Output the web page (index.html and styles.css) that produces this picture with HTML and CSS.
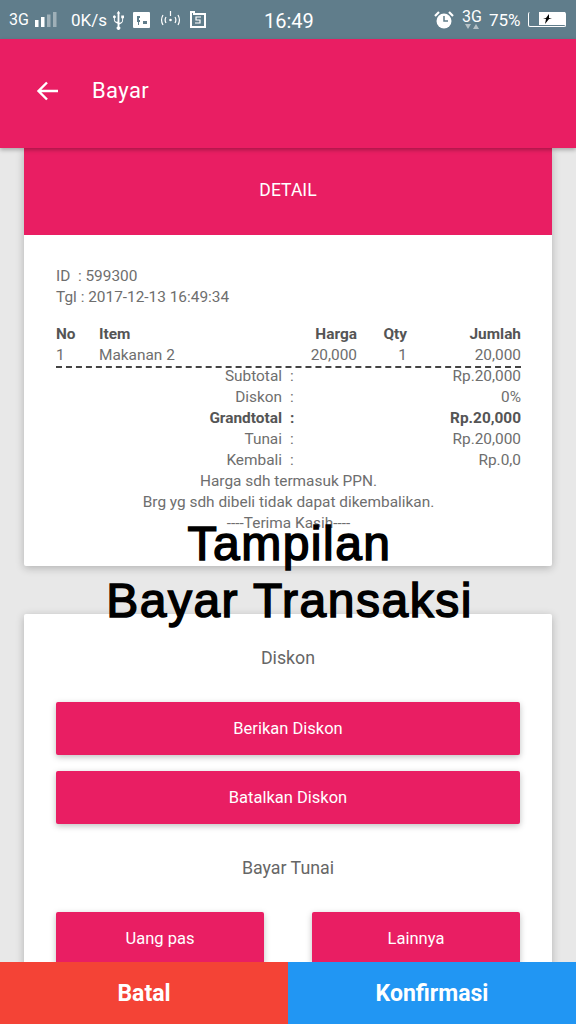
FILE: index.html
```html
<!DOCTYPE html>
<html lang="id">
<head>
<meta charset="utf-8">
<title>Bayar</title>
<link rel="stylesheet" href="styles.css">
</head>
<body>
<div class="app">
  <div class="status">
    <div class="st-left">
      <span class="st-3g">3G</span>
      <svg class="ic" width="22" height="18" viewBox="0 0 22 18"><rect x="0" y="9" width="3.500" height="7" fill="#fff"/><rect x="6" y="6" width="3.500" height="10" fill="#fff"/><rect x="12" y="3.500" width="3.500" height="12.500" fill="#9fb0b8"/><rect x="18" y="1" width="3.500" height="15" fill="#9fb0b8"/></svg>
      <span class="st-net">0K/s</span>
      <svg class="ic-usb" width="11" height="20" viewBox="0 0 12 20"><path d="M6 0l2 3H7v10c2 0 3-1 3-3V8H9V5h3v3h-1v2c0 3-2 4-4 5v2a2 2 0 1 1-2 0v-3c-2-1-4-2-4-4V8a1.500 1.500 0 1 1 1 0v2c0 1 1 2 3 2V3H4z" fill="#fff"/></svg>
      <svg class="ic-box" width="17" height="16" viewBox="0 0 17 16"><rect width="17" height="16" rx="1" fill="#fff"/><path d="M4 4h3v2H6v2h1v2H6v3H5v-3H4zM10 9h4v3h-4z" fill="#607d8b"/></svg>
      <svg class="ic-hot" width="21" height="18" viewBox="0 0 21 18"><g fill="none" stroke="#fff" stroke-width="1.200"><path d="M3 4a10 10 0 0 0 0 10M6 6a6 6 0 0 0 0 6M18 4a10 10 0 0 1 0 10M15 6a6 6 0 0 1 0 6M10.500 0v5"/></g><circle cx="10.500" cy="9" r="1.300" fill="#fff"/></svg>
      <svg class="ic-s" width="16" height="17" viewBox="0 0 16 17"><path d="M1 1h3v2h11v13H1z" fill="none" stroke="#fff" stroke-width="2"/><path d="M11 6H6v3h4v3H5" fill="none" stroke="#fff" stroke-width="1.200"/></svg>
    </div>
    <span class="clock">16:49</span>
    <div class="st-right">
      <svg width="20" height="18" viewBox="0 0 20 18"><circle cx="10" cy="10" r="7.500" fill="#fff"/><path d="M10 5v5h4" fill="none" stroke="#607d8b" stroke-width="1.500"/><path d="M1 5l4-4M19 5l-4-4" stroke="#fff" stroke-width="2.200"/></svg>
      <div class="net3g"><span>3G</span><svg width="14" height="6" viewBox="0 0 14 6"><path d="M0 0h6L3 5zM8 5h6l-3-5z" fill="#b5c1c6"/></svg></div>
      <span class="pct">75%</span>
      <div class="batt"><div class="batt-fill"><svg width="9" height="10" viewBox="0 0 9 10"><path d="M6 0L3 4H0l3 1-1 5 4-5h3L6 4z" fill="#000"/></svg></div></div>
    </div>
  </div>

  <header class="bar">
    <svg class="back" width="24" height="24" viewBox="0 0 24 24"><path d="M22 12H3M11 3.500L2.500 12l8.500 8.500" fill="none" stroke="#fff" stroke-width="2.400"/></svg>
    <span class="bar-title">Bayar</span>
  </header>

  <main class="scroll">
    <section class="card detail">
      <div class="detail-head">DETAIL</div>
      <div class="receipt">
        <div class="meta">ID &nbsp;: 599300</div>
        <div class="meta">Tgl : 2017-12-13 16:49:34</div>
        <div class="items">
          <div class="row strong"><span class="c-no">No</span><span class="c-item">Item</span><span class="c-price">Harga</span><span class="c-qty">Qty</span><span class="c-sum">Jumlah</span></div>
          <div class="row"><span class="c-no">1</span><span class="c-item">Makanan 2</span><span class="c-price">20,000</span><span class="c-qty">1</span><span class="c-sum">20,000</span></div>
        </div>
        <div class="totals">
          <div class="total"><span class="t-label">Subtotal</span><span class="t-colon">:</span><span class="t-val">Rp.20,000</span></div>
          <div class="total"><span class="t-label">Diskon</span><span class="t-colon">:</span><span class="t-val">0%</span></div>
          <div class="total strong"><span class="t-label">Grandtotal</span><span class="t-colon">:</span><span class="t-val">Rp.20,000</span></div>
          <div class="total"><span class="t-label">Tunai</span><span class="t-colon">:</span><span class="t-val">Rp.20,000</span></div>
          <div class="total"><span class="t-label">Kembali</span><span class="t-colon">:</span><span class="t-val">Rp.0,0</span></div>
        </div>
        <div class="note">Harga sdh termasuk PPN.</div>
        <div class="note">Brg yg sdh dibeli tidak dapat dikembalikan.</div>
        <div class="note">----Terima Kasih----</div>
      </div>
    </section>

    <section class="card pay">
      <div class="pay-label first">Diskon</div>
      <button class="btn full">Berikan Diskon</button>
      <button class="btn full second">Batalkan Diskon</button>
      <div class="pay-label tunai">Bayar Tunai</div>
      <div class="btn-row">
        <button class="btn half">Uang pas</button>
        <button class="btn half">Lainnya</button>
      </div>
    </section>
  </main>

  <div class="caption">Tampilan<br>Bayar Transaksi</div>

  <footer class="foot">
    <div class="foot-btn cancel">Batal</div>
    <div class="foot-btn ok">Konfirmasi</div>
  </footer>
</div>
</body>
</html>
```
FILE: styles.css
```css
* { box-sizing: border-box; }
html, body { margin: 0; padding: 0; }
body { font-family: Roboto, "Liberation Sans", sans-serif; background: #e8e8e8; }
.app { width: 576px; height: 1024px; position: relative; overflow: hidden; display: flex; flex-direction: column; background: #e8e8e8; }

.status { height: 39px; background: #607d8b; color: #fff; display: flex; align-items: center; position: relative; flex: none; }
.st-left { display: flex; align-items: center; padding-left: 9px; }
.st-3g { font-size: 16px; width: 26px; }
.st-net { font-size: 17px; margin-left: 14px; width: 42px; }
.ic-usb { margin-left: 0; }
.ic-box { margin-left: 9px; }
.ic-hot { margin-left: 10px; }
.ic-s { margin-left: 9px; }
.clock { position: absolute; left: 264px; top: 10px; font-size: 20px; line-height: 23px; }
.st-right { margin-left: auto; display: flex; align-items: center; padding-right: 10px; }
.net3g { display: flex; flex-direction: column; align-items: center; font-size: 16px; line-height: 15px; margin-left: 8px; width: 20px; }
.net3g svg { display: block; }
.pct { font-size: 17px; margin-left: 7px; width: 39px; }
.batt { width: 38px; height: 15px; border: 1px solid #fff; border-top: 0; border-radius: 2px; display: flex; justify-content: flex-end; }
.batt-fill { width: 26px; height: 13px; background: #fff; display: flex; align-items: center; padding-left: 4px; }

.bar { height: 109px; background: #e91e63; display: flex; align-items: center; flex: none; padding: 0 0 6px 36px; color: #fff; box-shadow: 0 2px 4px rgba(0,0,0,.28); position: relative; z-index: 2; }
.back { display: block; }
.bar-title { font-size: 22px; margin-left: 32px; letter-spacing: .4px; }

.scroll { flex: 1; padding: 0 24px; overflow: hidden; margin-bottom: 62px; }
.card { background: #fff; border-radius: 2px; box-shadow: 0 2px 8px rgba(0,0,0,.24); }
.detail { height: 418px; }
.detail-head { height: 87px; padding-bottom: 3px; background: #e91e63; color: #fff; font-size: 17.6px; display: flex; align-items: center; justify-content: center; }
.receipt { padding: 31px 31px 0 32px; font-size: 15.4px; color: #6e6e6e; line-height: 21px; }
.items { margin-top: 16px; border-bottom: 2px dashed #444; }
.row { display: flex; height: 21px; }
.strong { font-weight: 700; color: #555; }
.c-no { width: 43px; }
.c-item { flex: 1; }
.c-price { width: 70px; text-align: right; }
.c-qty { width: 50px; text-align: right; }
.c-sum { width: 114px; text-align: right; }
.totals { margin-top: -2px; }
.total { display: flex; height: 21px; }
.t-label { width: 226px; text-align: right; }
.t-colon { width: 12px; margin-left: 8px; }
.t-val { flex: 1; text-align: right; }
.note { text-align: center; height: 21px; }

.pay { margin-top: 48px; height: 420px; padding: 0 32px; color: #666; }
.pay-label { text-align: center; font-size: 17.8px; }
.first { padding-top: 33px; height: 88px; }
.btn { display: block; border: 0; background: #e91e63; color: #fff; font-family: inherit; font-size: 16.5px; height: 53px; padding: 0; border-radius: 2px; box-shadow: 0 2px 6px rgba(0,0,0,.25); }
.full { width: 100%; }
.second { margin-top: 16px; }
.tunai { height: 88px; padding-top: 33px; }
.btn-row { display: flex; justify-content: space-between; }
.half { width: 208px; }

.caption { position: absolute; left: 3px; right: 0; top: 515px; text-align: center; font-family: "Liberation Sans", Arial, sans-serif; font-size: 48px; line-height: 57px; letter-spacing: 1.5px; -webkit-text-stroke: 1.5px #000; color: #000; }

.foot { position: absolute; left: 0; right: 0; bottom: 0; height: 62px; display: flex; z-index: 3; }
.foot-btn { flex: 1; display: flex; align-items: center; justify-content: center; color: #fff; font-size: 23px; font-weight: 700; }
.cancel { background: #f44336; }
.ok { background: #2196f3; }
```
